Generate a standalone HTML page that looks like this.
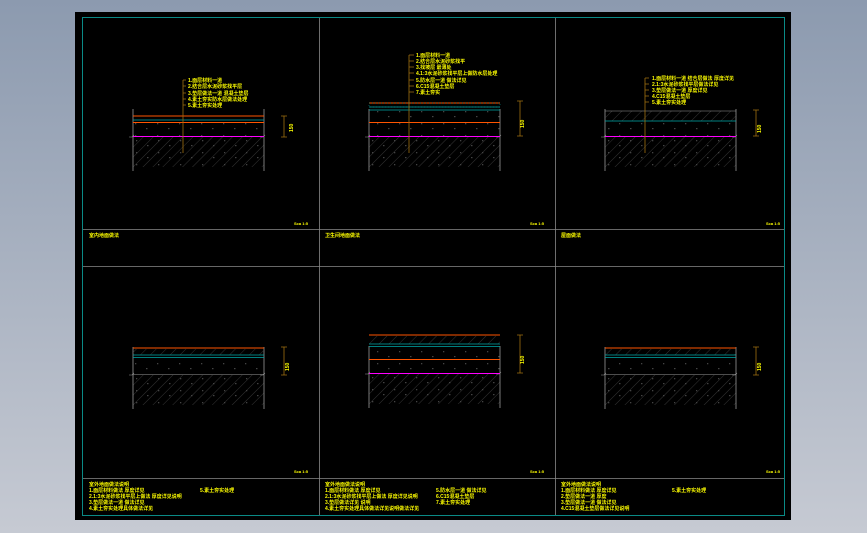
<!DOCTYPE html><html><head><meta charset="utf-8"><style>
html,body{margin:0;padding:0;width:867px;height:533px;overflow:hidden;background:linear-gradient(#8c9aaf,#c6cad3);}
svg{position:absolute;left:0;top:0}
text{font-family:"Liberation Sans","Noto Sans CJK SC",sans-serif;font-size:5px;fill:#ff0;font-weight:bold}
</style></head><body>
<svg width="867" height="533" viewBox="0 0 867 533">
<defs>
<pattern id="h" width="7" height="7" patternUnits="userSpaceOnUse" patternTransform="rotate(45)">
<line x1="0" y1="0" x2="0" y2="7" stroke="#4a4a4a" stroke-width="0.7"/></pattern>
<pattern id="d" width="22" height="12" patternUnits="userSpaceOnUse">
<rect x="3" y="3" width="1.3" height="1.3" fill="#444"/><rect x="14" y="8" width="1.5" height="1.2" fill="#444"/></pattern>
<g id="sec">
<rect x="0" y="0" width="131" height="30" fill="url(#h)"/>
<rect x="0" y="0" width="131" height="30" fill="url(#d)"/>
<line x1="0" y1="-28" x2="0" y2="34" stroke="#999" stroke-width="0.8"/>
<line x1="131" y1="-28" x2="131" y2="34" stroke="#999" stroke-width="0.8"/>
<path d="M-4 0 h3 l2 -2 M127 0 h3 l2 -2" stroke="#999" stroke-width="0.6" fill="none"/>
</g>
</defs>
<rect x="75" y="12" width="716" height="508" fill="#000"/>
<rect x="82.5" y="17.5" width="702" height="498" fill="none" stroke="#0a8a86" stroke-width="1"/>
<g stroke="#8a8a8a" stroke-width="0.8">
<line x1="319.5" y1="18" x2="319.5" y2="515"/><line x1="555.5" y1="18" x2="555.5" y2="515"/>
<line x1="83" y1="229.5" x2="784" y2="229.5"/><line x1="83" y1="266.5" x2="784" y2="266.5"/>
<line x1="83" y1="478.5" x2="784" y2="478.5"/>
</g>
<!-- panel 1 -->
<use href="#sec" x="133" y="137"/>
<rect x="133" y="122" width="131" height="14" fill="url(#d)"/>
<line x1="133" y1="116" x2="264" y2="116" stroke="#f50" stroke-width="0.9"/>
<line x1="133" y1="120" x2="264" y2="120" stroke="#0aa" stroke-width="0.8"/>
<line x1="133" y1="122.5" x2="264" y2="122.5" stroke="#f50" stroke-width="0.9"/>
<line x1="133" y1="136.5" x2="264" y2="136.5" stroke="#f0f" stroke-width="1"/>
<path d="M183 80v73M183 80h3M183 86h3M183 93h3M183 99h3M183 105h3" stroke="#a07010" stroke-width="0.8" fill="none"/>
<text x="188" y="82">1.面层材料一道</text><text x="188" y="88">2.结合层水泥砂浆找平层</text><text x="188" y="95">3.垫层做法一道 混凝土垫层</text><text x="188" y="101">4.素土夯实防水层做法处理</text><text x="188" y="107">5.素土夯实处理</text>
<path d="M284 116v21M281 116h6M281 137h6" stroke="#a07010" stroke-width="0.8"/><text x="280" y="133" transform="rotate(-90 286 126)">150</text>
<!-- panel 2 -->
<use href="#sec" x="369" y="137"/>
<rect x="369" y="110" width="131" height="26" fill="url(#d)"/>
<line x1="369" y1="103" x2="500" y2="103" stroke="#f50" stroke-width="0.9"/>
<rect x="369" y="103" width="131" height="4" fill="none" stroke="#0aa" stroke-width="0.5" stroke-dasharray="1 2"/>
<line x1="369" y1="107" x2="500" y2="107" stroke="#0aa" stroke-width="0.8"/>
<line x1="369" y1="110" x2="500" y2="110" stroke="#0aa" stroke-width="0.8"/>
<line x1="369" y1="122.5" x2="500" y2="122.5" stroke="#f50" stroke-width="0.9"/>
<line x1="369" y1="136.5" x2="500" y2="136.5" stroke="#f0f" stroke-width="1"/>
<path d="M409 55v98M409 55h5M409 61h5M409 67h5M409 73h5M409 80h5M409 86h5M409 92h5" stroke="#a07010" stroke-width="0.8" fill="none"/>
<text x="416" y="57">1.面层材料一道</text><text x="416" y="63">2.结合层水泥砂浆找平</text><text x="416" y="69">3.找坡层 最薄处</text><text x="416" y="75">4.1:3水泥砂浆找平层上做防水层处理</text><text x="416" y="82">5.防水层一道 做法详见</text><text x="416" y="88">6.C15混凝土垫层</text><text x="416" y="94">7.素土夯实</text>
<path d="M520 101v35M517 101h6M517 136h6" stroke="#a07010" stroke-width="0.8"/><text x="510" y="122" transform="rotate(-90 520 118)">150</text>
<!-- panel 3 -->
<use href="#sec" x="605" y="137"/>
<rect x="605" y="111" width="131" height="10" fill="url(#h)"/>
<rect x="605" y="121" width="131" height="15" fill="url(#d)"/>
<line x1="605" y1="111" x2="736" y2="111" stroke="#999" stroke-width="0.6"/>
<line x1="605" y1="121" x2="736" y2="121" stroke="#0aa" stroke-width="0.8"/>
<line x1="605" y1="136.5" x2="736" y2="136.5" stroke="#f0f" stroke-width="1"/>
<path d="M645 78v75M645 78h4M645 84h4M645 90h4M645 96h4M645 102h4" stroke="#a07010" stroke-width="0.8" fill="none"/>
<text x="652" y="80">1.面层材料一道 结合层做法 厚度详见</text><text x="652" y="86">2.1:3水泥砂浆找平层做法详见</text><text x="652" y="92">3.垫层做法一道 厚度详见</text><text x="652" y="98">4.C15混凝土垫层</text><text x="652" y="104">5.素土夯实处理</text>
<path d="M756 110v26M753 110h6M753 136h6" stroke="#a07010" stroke-width="0.8"/><text x="746" y="128" transform="rotate(-90 756 123)">150</text>
<!-- bottom row -->
<use href="#sec" x="133" y="375"/>
<rect x="133" y="358" width="131" height="16" fill="url(#d)"/>
<line x1="133" y1="348" x2="264" y2="348" stroke="#f50" stroke-width="0.9"/>
<rect x="133" y="349" width="131" height="6" fill="url(#h)"/>
<line x1="133" y1="355" x2="264" y2="355" stroke="#0aa" stroke-width="0.8"/>
<line x1="133" y1="357.5" x2="264" y2="357.5" stroke="#0aa" stroke-width="0.8"/>
<line x1="133" y1="374.5" x2="264" y2="374.5" stroke="#999" stroke-width="0.6"/>
<path d="M284 347v28M281 347h6M281 375h6" stroke="#a07010" stroke-width="0.8"/><text x="274" y="366" transform="rotate(-90 284 361)">150</text>
<use href="#sec" x="369" y="374"/>
<rect x="369" y="336" width="131" height="8" fill="url(#h)"/>
<rect x="369" y="348" width="131" height="25" fill="url(#d)"/>
<line x1="369" y1="335" x2="500" y2="335" stroke="#f50" stroke-width="0.9"/>
<line x1="369" y1="344" x2="500" y2="344" stroke="#0aa" stroke-width="0.8"/>
<line x1="369" y1="346.5" x2="500" y2="346.5" stroke="#0aa" stroke-width="0.8"/>
<line x1="369" y1="359.5" x2="500" y2="359.5" stroke="#f50" stroke-width="0.9"/>
<line x1="369" y1="373.5" x2="500" y2="373.5" stroke="#f0f" stroke-width="1"/>
<path d="M520 335v38M517 335h6M517 373h6" stroke="#a07010" stroke-width="0.8"/><text x="510" y="358" transform="rotate(-90 520 354)">150</text>
<use href="#sec" x="605" y="375"/>
<rect x="605" y="358" width="131" height="16" fill="url(#d)"/>
<line x1="605" y1="348" x2="736" y2="348" stroke="#f50" stroke-width="0.9"/>
<rect x="605" y="349" width="131" height="6" fill="url(#h)"/>
<line x1="605" y1="355" x2="736" y2="355" stroke="#0aa" stroke-width="0.8"/>
<line x1="605" y1="357.5" x2="736" y2="357.5" stroke="#0aa" stroke-width="0.8"/>
<line x1="605" y1="374.5" x2="736" y2="374.5" stroke="#999" stroke-width="0.6"/>
<path d="M756 347v28M753 347h6M753 375h6" stroke="#a07010" stroke-width="0.8"/><text x="746" y="366" transform="rotate(-90 756 361)">150</text>
<!-- scale labels -->
<text x="294" y="225" style="font-size:4px">Sca 1:5</text><text x="530" y="225" style="font-size:4px">Sca 1:5</text><text x="766" y="225" style="font-size:4px">Sca 1:5</text>
<text x="294" y="473" style="font-size:4px">Sca 1:5</text><text x="530" y="473" style="font-size:4px">Sca 1:5</text><text x="766" y="473" style="font-size:4px">Sca 1:5</text>
<text x="89" y="237">室内地面做法</text><text x="325" y="237">卫生间地面做法</text><text x="561" y="237">屋面做法</text>
<!-- bottom notes -->
<text x="89" y="486">室外地面做法说明</text><text x="89" y="492">1.面层材料做法 厚度详见</text><text x="89" y="498">2.1:3水泥砂浆找平层上做法 厚度详见说明</text><text x="89" y="504">3.垫层做法一道 做法详见</text><text x="89" y="510">4.素土夯实处理具体做法详见</text><text x="200" y="492">5.素土夯实处理</text>
<text x="325" y="486">室外地面做法说明</text><text x="325" y="492">1.面层材料做法 厚度详见</text><text x="325" y="498">2.1:3水泥砂浆找平层上做法 厚度详见说明</text><text x="325" y="504">3.垫层做法详见 说明</text><text x="325" y="510">4.素土夯实处理具体做法详见说明做法详见</text><text x="436" y="492">5.防水层一道 做法详见</text><text x="436" y="498">6.C15混凝土垫层</text><text x="436" y="504">7.素土夯实处理</text>
<text x="561" y="486">室外地面做法说明</text><text x="561" y="492">1.面层材料做法 厚度详见</text><text x="561" y="498">2.垫层做法一道 厚度</text><text x="561" y="504">3.垫层做法一道 做法详见</text><text x="561" y="510">4.C15混凝土垫层做法详见说明</text><text x="672" y="492">5.素土夯实处理</text>
</svg>
</body></html>
